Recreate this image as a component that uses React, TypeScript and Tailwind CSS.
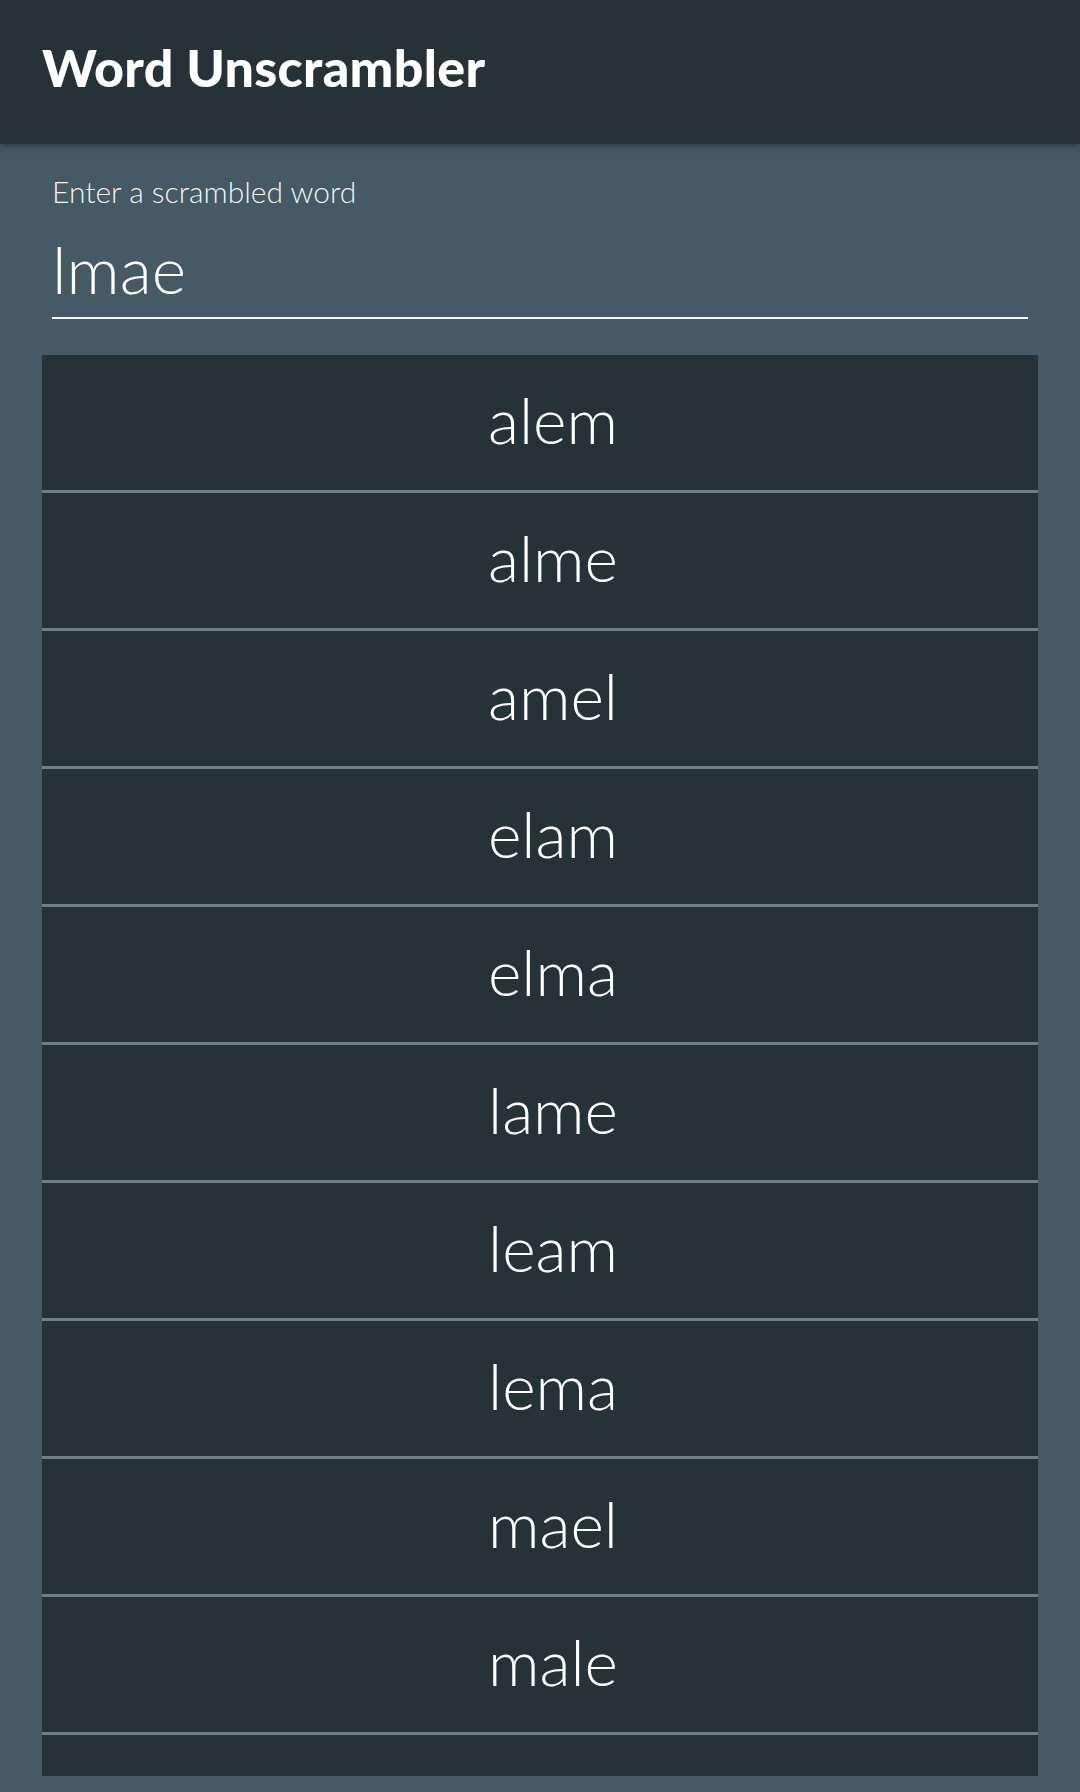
import { useState } from "react";

const WORDS = ["alem", "alme", "amel", "elam", "elma", "lame", "leam", "lema", "mael", "male", "meal"];

export default function App() {
  const [word, setWord] = useState("lmae");

  return (
    <div className="h-[1792px] flex flex-col bg-[#455a64] font-['Lato','Open_Sans',sans-serif] text-white overflow-hidden">
      <header className="h-[144px] shrink-0 bg-[#263238] flex items-center px-[42px] shadow-[0_2px_6px_rgba(0,0,0,0.35)] relative z-10">
        <h1 className="text-[52px] font-black tracking-[0.3px] leading-none -mt-[10px]">Word Unscrambler</h1>
      </header>

      <div className="px-[52px] pt-[32px] shrink-0">
        <label className="block text-[30px] font-light leading-none text-white/95">Enter a scrambled word</label>
        <input
          value={word}
          onChange={e => setWord(e.target.value)}
          className="w-full bg-transparent outline-none text-[66px] font-light leading-none h-[113px] pt-[14px] border-b-2 border-white/95"
        />
      </div>

      <div className="mx-[42px] mt-[36px] mb-[16px] flex-1 min-h-0 overflow-hidden bg-[#263238]">
        {WORDS.map(w => (
          <div key={w} className="h-[138px] border-b-[3px] border-[#718089] flex items-center justify-center pl-[26px] pb-[6px] text-[64px] font-light">
            {w}
          </div>
        ))}
      </div>
    </div>
  );
}
